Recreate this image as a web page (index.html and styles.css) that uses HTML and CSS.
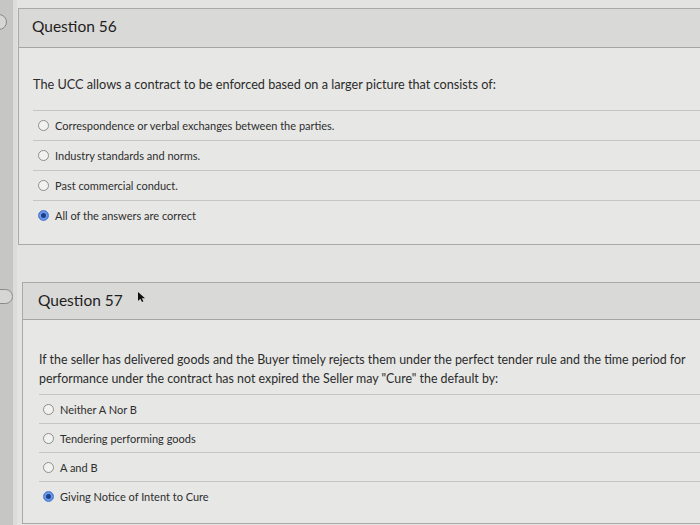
FILE: index.html
```html
<!DOCTYPE html>
<html>
<head>
<meta charset="utf-8">
<link rel="stylesheet" href="styles.css">
</head>
<body>
<div class="page">
  <div class="rail">
    <div class="tab tab1"></div>
    <div class="tab tab2"></div>
  </div>
  <div class="main">
    <section class="q q56">
      <header class="qhead"><h2 class="qtitle">Question 56</h2></header>
      <div class="qbody">
        <p class="qtext">The UCC allows a contract to be enforced based on a larger picture that consists of:</p>
        <ul class="opts">
          <li class="opt"><span class="radio"></span>Correspondence or verbal exchanges between the parties.</li>
          <li class="opt"><span class="radio"></span>Industry standards and norms.</li>
          <li class="opt"><span class="radio"></span>Past commercial conduct.</li>
          <li class="opt"><span class="radio on"></span>All of the answers are correct</li>
        </ul>
      </div>
    </section>
    <section class="q q57">
      <header class="qhead"><h2 class="qtitle">Question 57</h2></header>
      <div class="qbody">
        <p class="qtext">If the seller has delivered goods and the Buyer timely rejects them under the perfect tender rule and the time period for performance under the contract has not expired the Seller may "Cure" the default by:</p>
        <ul class="opts">
          <li class="opt"><span class="radio"></span>Neither A Nor B</li>
          <li class="opt"><span class="radio"></span>Tendering performing goods</li>
          <li class="opt"><span class="radio"></span>A and B</li>
          <li class="opt"><span class="radio on"></span>Giving Notice of Intent to Cure</li>
        </ul>
      </div>
    </section>
  </div>
</div>
<svg class="cursor" width="10" height="12" viewBox="0 0 10 12"><path d="M1 1 L1 10 L3.3 7.8 L5 11 L6.4 10.3 L4.8 7.2 L8 7.2 Z" fill="#111"/></svg>
</body>
</html>
```
FILE: styles.css
```css
html, body {
  margin: 0;
  padding: 0;
}
body {
  width: 700px;
  height: 525px;
  overflow: hidden;
  background: #e3e3e1;
  font-family: Lato, "Open Sans", sans-serif;
  color: #2a2a2a;
  position: relative;
}
.page {
  display: flex;
  height: 525px;
}
.rail {
  width: 13px;
  flex: none;
  background: #c6c6c4;
  border-right: 4px solid #dcdcda;
  position: relative;
}
.tab {
  position: absolute;
  left: -6px;
  border: 1.5px solid #8a8a88;
  border-radius: 0 8px 8px 0;
  background: #d6d6d4;
}
.tab1 {
  top: 14px;
  width: 11px;
  height: 14px;
}
.tab2 {
  top: 289px;
  width: 17px;
  height: 13px;
}
.main {
  flex: 1;
  display: flex;
  flex-direction: column;
  min-width: 0;
}
.q {
  border: 1px solid #a9a9a7;
  border-right: none;
  background: #e7e7e5;
}
.q56 {
  margin: 8px 0 0 1px;
}
.q57 {
  margin: 37px 0 0 5px;
}
.qhead {
  background: #d9d9d7;
  border-bottom: 1px solid #a5a5a3;
}
.q56 .qhead {
  height: 38px;
  padding-left: 13px;
}
.q57 .qhead {
  height: 36px;
  padding-left: 15px;
}
.qtitle {
  margin: 0;
  font-weight: 400;
  font-size: 15.5px;
  line-height: 34px;
  color: #1e1e1e;
}
.q57 .qtitle {
  line-height: 35px;
}
.qbody {
  padding: 0 0 14px 14px;
}
.q56 .qbody {
  padding-top: 27px;
}
.q57 .qbody {
  padding-top: 30px;
  padding-left: 16px;
  padding-bottom: 13px;
}
.qtext {
  margin: 0 0 16px 0;
  font-size: 12.7px;
  line-height: 19px;
  color: #2b2b2b;
}
.q57 .qtext {
  font-size: 12.4px;
  margin-bottom: 6px;
}
.opts {
  list-style: none;
  margin: 0;
  padding: 0;
}
.opt {
  display: flex;
  align-items: center;
  height: 29px;
  border-top: 1px solid #c6c6c4;
  font-size: 11px;
  color: #2e2e2e;
  padding-left: 5px;
}
.q57 .opt {
  padding-left: 4px;
  height: 28px;
}
.radio {
  width: 9px;
  height: 9px;
  border-radius: 50%;
  border: 1px solid #8e8e8c;
  background: #f2f2f0;
  margin-right: 6px;
  flex: none;
  box-sizing: content-box;
}
.radio.on {
  background: #1d3f8a;
  border: 1px solid #5c8be0;
  box-shadow: inset 0 0 0 2px #6b9ae8;
}
.cursor {
  position: absolute;
  left: 137px;
  top: 291px;
}
```
